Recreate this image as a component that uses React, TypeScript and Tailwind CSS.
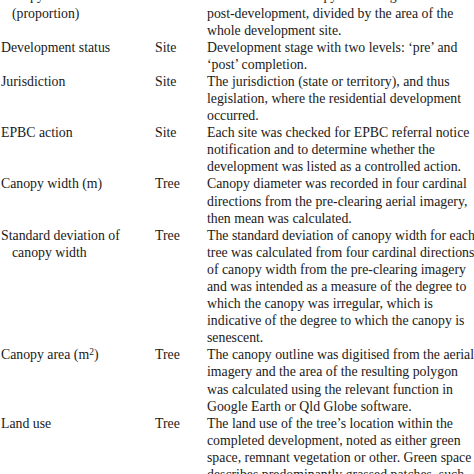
import React from 'react';

type Row = {
  name: React.ReactNode[];
  scale: string;
  desc: string[];
};

const rows: Row[] = [
  {
    name: ['Canopy cover', '(proportion)'],
    scale: 'Site',
    desc: [
      'The area of tree canopy remaining at the site',
      'post-development, divided by the area of the',
      'whole development site.',
    ],
  },
  {
    name: ['Development status'],
    scale: 'Site',
    desc: ['Development stage with two levels: ‘pre’ and', '‘post’ completion.'],
  },
  {
    name: ['Jurisdiction'],
    scale: 'Site',
    desc: [
      'The jurisdiction (state or territory), and thus',
      'legislation, where the residential development',
      'occurred.',
    ],
  },
  {
    name: ['EPBC action'],
    scale: 'Site',
    desc: [
      'Each site was checked for EPBC referral notice',
      'notification and to determine whether the',
      'development was listed as a controlled action.',
    ],
  },
  {
    name: ['Canopy width (m)'],
    scale: 'Tree',
    desc: [
      'Canopy diameter was recorded in four cardinal',
      'directions from the pre-clearing aerial imagery,',
      'then mean was calculated.',
    ],
  },
  {
    name: ['Standard deviation of', 'canopy width'],
    scale: 'Tree',
    desc: [
      'The standard deviation of canopy width for each',
      'tree was calculated from four cardinal directions',
      'of canopy width from the pre-clearing imagery',
      'and was intended as a measure of the degree to',
      'which the canopy was irregular, which is',
      'indicative of the degree to which the canopy is',
      'senescent.',
    ],
  },
  {
    name: [
      <>
        Canopy area (m<sup className="text-[9.5px] leading-none">2</sup>)
      </>,
    ],
    scale: 'Tree',
    desc: [
      'The canopy outline was digitised from the aerial',
      'imagery and the area of the resulting polygon',
      'was calculated using the relevant function in',
      'Google Earth or Qld Globe software.',
    ],
  },
  {
    name: ['Land use'],
    scale: 'Tree',
    desc: [
      'The land use of the tree’s location within the',
      'completed development, noted as either green',
      'space, remnant vegetation or other. Green space',
      'describes predominantly grassed patches, such',
    ],
  },
];

export default function App() {
  return (
    <div className="h-[474px] w-[474px] overflow-hidden bg-white text-[#1a1a1a]">
      <div
        className="-mt-[12.6px] grid grid-cols-[154px_52px_1fr] text-[13.8px] leading-[17.1px]"
        style={{ fontFamily: '"Liberation Serif", "Times New Roman", serif' }}
      >
        {rows.map((row, i) => (
          <React.Fragment key={i}>
            <div className="pl-px">
              {row.name.map((line, j) => (
                <div key={j} className={j > 0 ? 'whitespace-nowrap pl-[11px]' : 'whitespace-nowrap'}>
                  {line}
                </div>
              ))}
            </div>
            <div className="pl-px">{row.scale}</div>
            <div className="pl-px">
              {row.desc.map((line, j) => (
                <div key={j} className="whitespace-nowrap">
                  {line}
                </div>
              ))}
            </div>
          </React.Fragment>
        ))}
      </div>
    </div>
  );
}
